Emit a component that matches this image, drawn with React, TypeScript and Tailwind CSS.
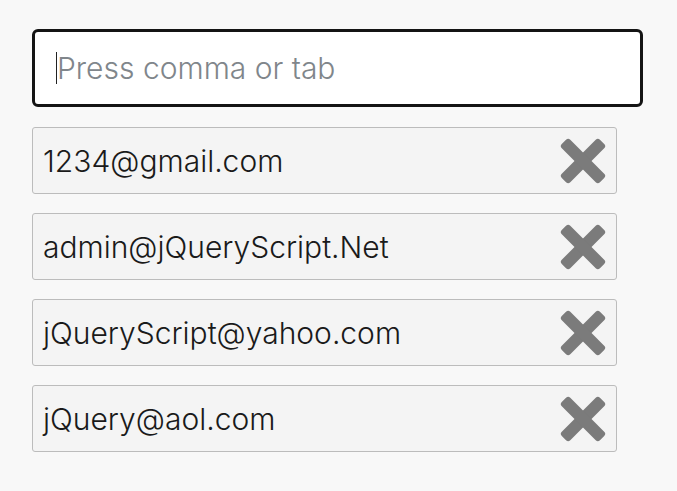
import { useState } from 'react';

const initialTags = ['1234@gmail.com', 'admin@jQueryScript.Net', 'jQueryScript@yahoo.com', 'jQuery@aol.com'];

function CloseIcon() {
    return (
        <svg width="46" height="46" viewBox="0 0 46 46" className="shrink-0">
            <g transform="rotate(45 23 23)" fill="#7b7b7b">
                <rect x="17" y="-4" width="12" height="54" rx="3" />
                <rect x="-4" y="17" width="54" height="12" rx="3" />
            </g>
        </svg>
    );
}

export default function App() {
    const [tags, setTags] = useState(initialTags);

    return (
        <div className="min-h-[491px] w-full bg-[#f8f8f8] px-8 pt-[29px] font-['Inter','Liberation_Sans',sans-serif]">
            <div className="w-[611px] h-[78px] rounded-[6px] border-[3px] border-[#141414] bg-white flex items-center pl-[21px]">
                <span className="w-px h-[32px] bg-[#222]" />
                <span className="text-[30px] font-light text-[#80868b] leading-none">Press comma or tab</span>
            </div>

            <div className="mt-[20px] flex flex-col gap-[19px] w-[585px]">
                {tags.map((tag) => (
                    <div
                        key={tag}
                        className="h-[67px] rounded-[3px] border border-[#bcbcbc] bg-[#f4f4f4] flex items-center justify-between pl-[10px] pr-[10px]"
                    >
                        <span className="text-[30px] font-light text-[#1a1a1a] leading-none">{tag}</span>
                        <button onClick={() => setTags(tags.filter((t) => t !== tag))}>
                            <CloseIcon />
                        </button>
                    </div>
                ))}
            </div>
        </div>
    );
}
